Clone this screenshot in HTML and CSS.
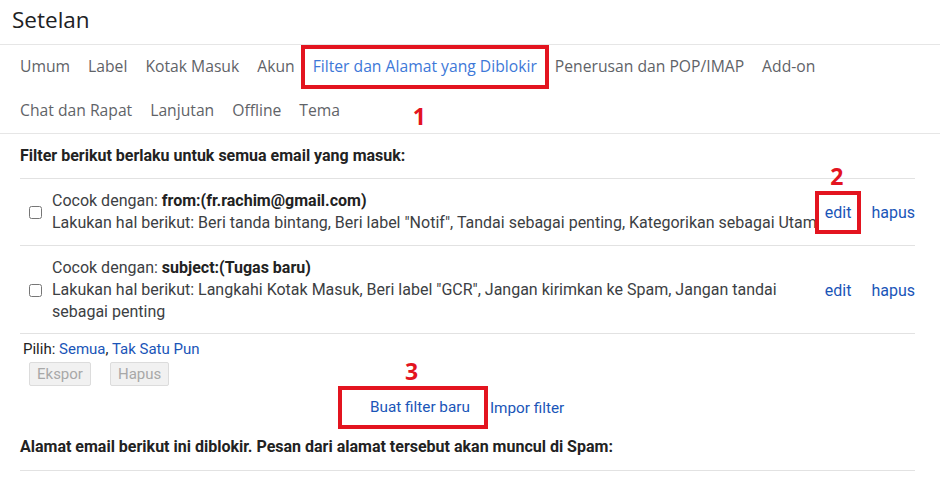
FILE: index.html
```html
<!DOCTYPE html>
<html>
<head>
    <meta name="viewport" content="width=device-width, initial-scale=1">
    <title>Setelan</title>
<link rel="stylesheet" href="styles.css">
</head>
<body>

<div class="header">
  <h1 class="title">Setelan</h1>
</div>

<div class="tabs">
  <span class="tab">Umum</span>
  <span class="tab">Label</span>
  <span class="tab">Kotak Masuk</span>
  <span class="tab">Akun</span>
  <span class="tab active marked">Filter dan Alamat yang Diblokir<b class="num num-below">1</b></span>
  <span class="tab">Penerusan dan POP/IMAP</span>
  <span class="tab">Add-on</span>
  <span class="tab">Chat dan Rapat</span>
  <span class="tab">Lanjutan</span>
  <span class="tab">Offline</span>
  <span class="tab">Tema</span>
</div>

<div class="content">
  <div class="heading">Filter berikut berlaku untuk semua email yang masuk:</div>

  <div class="filters">
    <div class="filter">
      <span class="check"><input type="checkbox"></span>
      <div class="desc">
        <div>Cocok dengan: <b>from:(fr.rachim@gmail.com)</b></div>
        <div class="nowrap">Lakukan hal berikut: Beri tanda bintang, Beri label "Notif", Tandai sebagai penting, Kategorikan sebagai Utama</div>
      </div>
      <div class="actions">
        <span class="edit marked">edit<b class="num num-above">2</b></span>
        <a href="#">hapus</a>
      </div>
    </div>
    <div class="filter">
      <span class="check"><input type="checkbox"></span>
      <div class="desc">
        <div>Cocok dengan: <b>subject:(Tugas baru)</b></div>
        <div>Lakukan hal berikut: Langkahi Kotak Masuk, Beri label "GCR", Jangan kirimkan ke Spam, Jangan tandai sebagai penting</div>
      </div>
      <div class="actions">
        <a href="#" class="edit">edit</a>
        <a href="#">hapus</a>
      </div>
    </div>
  </div>

  <div class="select">Pilih: <a href="#">Semua</a>, <a href="#">Tak Satu Pun</a></div>
  <div class="buttons">
    <button disabled>Ekspor</button>
    <button disabled>Hapus</button>
  </div>

  <div class="newfilter">
    <span class="create marked"><a href="#">Buat filter baru</a><b class="num num-above">3</b></span>
    <a href="#">Impor filter</a>
  </div>

  <div class="heading blocked">Alamat email berikut ini diblokir. Pesan dari alamat tersebut akan muncul di Spam:</div>
</div>

</body>
</html>
```

FILE: styles.css
```css
body {
    margin: 0;
    font-family: Roboto, "Liberation Sans", sans-serif;
    font-size: 16px;
    color: #222222;
    background: #ffffff;
}

a {
    color: #1a55b8;
    text-decoration: none;
}

.header {
    height: 44px;
    border-bottom: 1px solid #e6e6e6;
    margin-right: 3px;
}

.title {
    margin: 0;
    padding: 5px 0 0 12px;
    font-family: "Open Sans", sans-serif;
    font-weight: 400;
    font-size: 22.5px;
    line-height: 30px;
    color: #202124;
}

.tabs {
    display: flex;
    flex-wrap: wrap;
    padding: 0 100px 0 11px;
    border-bottom: 1px solid #e6e6e6;
    margin-right: 3px;
}

.tab {
    position: relative;
    height: 44px;
    line-height: 43px;
    padding: 0 9px;
    font-family: "Open Sans", sans-serif;
    font-size: 15.7px;
    color: #5f6368;
    white-space: nowrap;
}

.tab.active {
    color: #3d78d8;
    padding: 0 12px 0 12px;
    margin: 0 -3px 0 -3px;
}

/* red annotation boxes and numbers */
.marked {
    position: relative;
    z-index: 1;
    background: #ffffff;
    outline: 4px solid #e3141f;
    outline-offset: -4px;
}

.num {
    position: absolute;
    font-family: "Open Sans", sans-serif;
    font-weight: 700;
    font-size: 23px;
    line-height: 20px;
    color: #e3141f;
}

.num-below {
    top: 61px;
    left: 112px;
}

.num-above {
    bottom: 100%;
    margin-bottom: 5px;
    left: 50%;
    transform: translateX(-60%);
}

.content {
    padding: 0 28px 0 20px;
}

.heading {
    font-weight: 700;
    line-height: 20px;
    padding: 12px 0 12px;
    border-bottom: 1px solid #e2e2e2;
}

.filter {
    display: grid;
    grid-template-columns: 32px 772px 1fr;
    align-items: center;
    padding: 11px 0;
    border-bottom: 1px solid #e2e2e2;
}

.filter + .filter {
    padding-bottom: 10px;
}

.check {
    display: flex;
    align-items: center;
}

.check input {
    margin: 0 0 0 9px;
    width: 13px;
    height: 13px;
}

.desc {
    line-height: 22px;
    color: #3c4043;
}

.desc b {
    color: #222222;
}

.nowrap {
    white-space: nowrap;
}

.actions {
    display: flex;
    align-items: center;
    justify-content: flex-end;
    gap: 20px;
}

.actions .edit {
    color: #1a55b8;
    padding: 13px 10px;
    margin: 0 -10px;
    line-height: 17px;
}

.select {
    margin-top: 5px;
    padding-left: 3px;
    line-height: 20px;
    font-size: 15px;
}

.buttons {
    display: flex;
    gap: 19px;
    padding-left: 9px;
    margin-top: 3px;
}

.buttons button {
    height: 24px;
    padding: 0 7px;
    font-family: Roboto, "Liberation Sans", sans-serif;
    font-size: 15px;
    color: #a8a8a8;
    background: #f1f1f1;
    border: 1px solid #dcdcdc;
    border-radius: 2px;
}

.newfilter {
    display: flex;
    align-items: center;
    padding-left: 318px;
    font-size: 15.3px;
}

.create {
    display: inline-block;
    height: 43px;
    line-height: 43px;
    padding: 0 18px 0 32px;
    margin-right: 2px;
}

.blocked {
    padding: 8px 0 13px;
}
```
